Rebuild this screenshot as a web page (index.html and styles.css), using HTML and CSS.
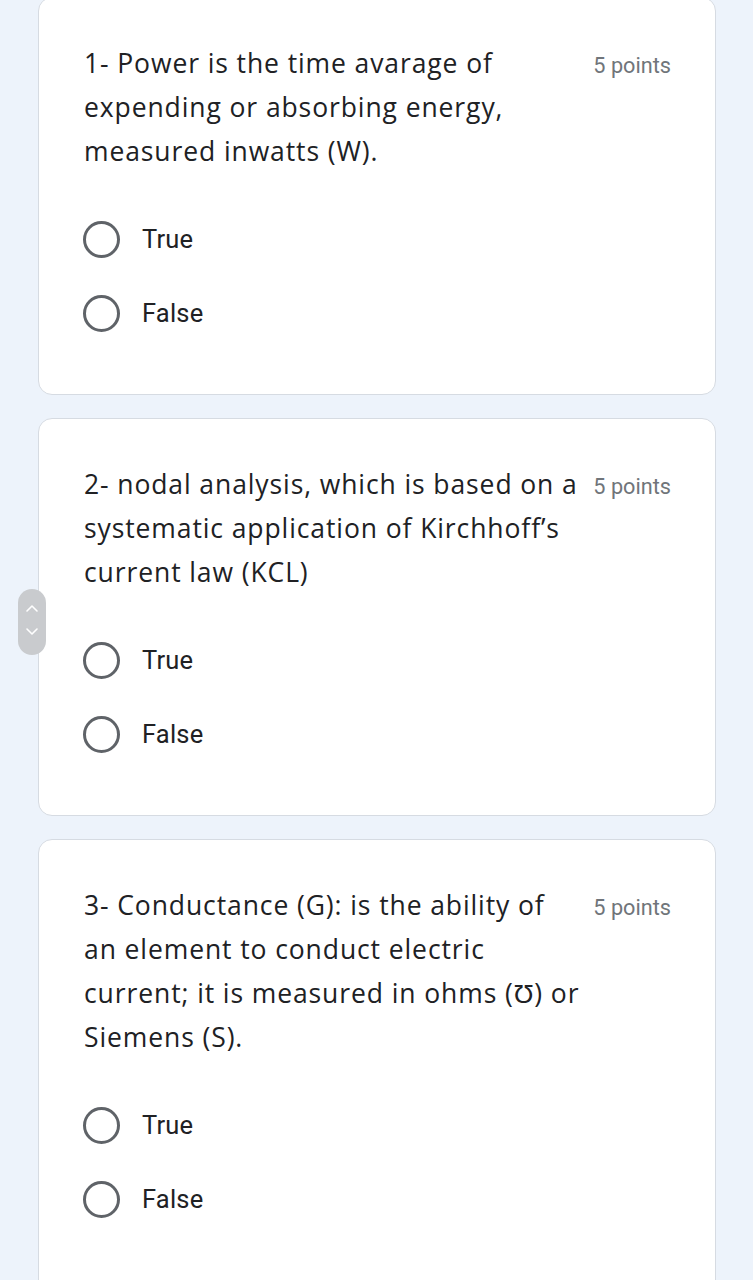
FILE: index.html
```html
<!DOCTYPE html>
<html>
<head>
<meta charset="utf-8">
<link rel="stylesheet" href="styles.css">
</head>
<body>
<div class="page">
  <div class="card">
    <div class="head">
      <div class="question">1- Power is the time avarage of<br>expending or absorbing energy,<br>measured inwatts (W).</div>
      <div class="points">5 points</div>
    </div>
    <div class="options">
      <div class="option"><span class="radio"></span><span class="label">True</span></div>
      <div class="option"><span class="radio"></span><span class="label">False</span></div>
    </div>
  </div>
  <div class="card">
    <div class="head">
      <div class="question">2- nodal analysis, which is based on a<br>systematic application of Kirchhoff’s<br>current law (KCL)</div>
      <div class="points">5 points</div>
    </div>
    <div class="options">
      <div class="option"><span class="radio"></span><span class="label">True</span></div>
      <div class="option"><span class="radio"></span><span class="label">False</span></div>
    </div>
  </div>
  <div class="card">
    <div class="head">
      <div class="question">3- Conductance (G): is the ability of<br>an element to conduct electric<br>current; it is measured in ohms (Ʊ) or<br>Siemens (S).</div>
      <div class="points">5 points</div>
    </div>
    <div class="options">
      <div class="option"><span class="radio"></span><span class="label">True</span></div>
      <div class="option"><span class="radio"></span><span class="label">False</span></div>
    </div>
  </div>
</div>
<div class="scroller">
  <svg width="28" height="66" viewBox="0 0 28 66">
    <path d="M9 22 L14 17 L19 22" fill="none" stroke="#ffffff" stroke-width="1.6" stroke-linecap="round" stroke-linejoin="round"/>
    <path d="M9 40 L14 45 L19 40" fill="none" stroke="#ffffff" stroke-width="1.6" stroke-linecap="round" stroke-linejoin="round"/>
  </svg>
</div>
</body>
</html>
```
FILE: styles.css
```css
html, body {
  margin: 0;
  padding: 0;
  background: #edf3fb;
  overflow: hidden;
}
body {
  height: 1280px;
}
.page {
  display: flex;
  flex-direction: column;
  gap: 23px;
  padding: 0 37px 0 38px;
  margin-top: -3px;
}
.card {
  background: #ffffff;
  border: 1px solid #d6dbe2;
  border-radius: 14px;
  padding: 43px 44px 0 45px;
  box-sizing: border-box;
}
.card:nth-child(1), .card:nth-child(2) {
  height: 398px;
}
.card:nth-child(3) {
  height: 520px;
}
.head {
  display: flex;
  align-items: flex-start;
}
.question {
  flex: 1;
  font-family: "Open Sans", sans-serif;
  font-size: 26.5px;
  line-height: 44px;
  color: #202124;
  white-space: nowrap;
  letter-spacing: 0.9px;
}
.points {
  flex: none;
  font-family: Roboto, sans-serif;
  font-size: 21.7px;
  line-height: 44px;
  padding-top: 3px;
  color: #70757a;
  margin-left: 8px;
}
.options {
  display: flex;
  flex-direction: column;
  gap: 26px;
  margin-top: 42px;
}
.option {
  display: flex;
  align-items: center;
  height: 48px;
}
.radio {
  width: 31px;
  height: 31px;
  margin-left: -1px;
  border: 3px solid #5f6368;
  border-radius: 50%;
  flex: none;
}
.label {
  font-family: Roboto, sans-serif;
  font-size: 25.5px;
  letter-spacing: 0.2px;
  color: #202124;
  margin-left: 22px;
}
.scroller {
  position: absolute;
  left: 18px;
  top: 589px;
  width: 28px;
  height: 66px;
  border-radius: 14px;
  background: #c9cbce;
}
.scroller svg {
  display: block;
}
```
